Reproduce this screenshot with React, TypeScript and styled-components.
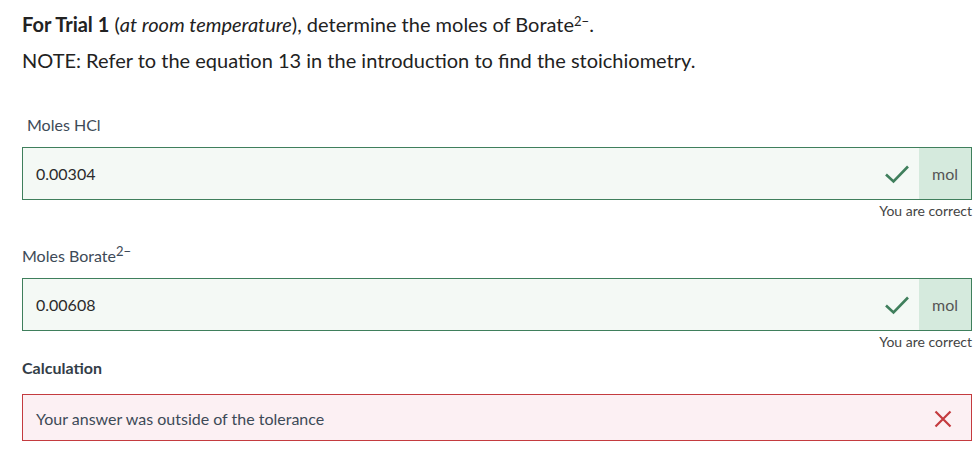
import styled, { createGlobalStyle } from 'styled-components'

const GlobalStyle = createGlobalStyle`
  body {
    margin: 0;
    background: #ffffff;
    font-family: Lato, "Noto Sans", sans-serif;
    color: #222;
  }
`

const Page = styled.div`
  padding: 9px 5px 0 22px;
`

const Prompt = styled.p`
  margin: 0;
  font-size: 20px;
  line-height: 30px;
  color: #222;

  & + & {
    margin-top: 6px;
  }
`

const Sup = styled.sup`
  font-size: 13px;
  line-height: 0;
  vertical-align: 0.45em;
`

const Field = styled.div<{ $first?: boolean }>`
  margin-top: ${(p) => (p.$first ? '38px' : '23px')};
`

const Label = styled.div<{ $indent?: boolean }>`
  font-size: 16px;
  line-height: 24px;
  color: #3d4a57;
  padding-left: ${(p) => (p.$indent ? '5px' : '0')};
`

const InputRow = styled.div`
  margin-top: 10px;
  height: 53px;
  box-sizing: border-box;
  display: flex;
  align-items: stretch;
  border: 1px solid #3f7f5c;
  background: #f4f9f5;
`

const Value = styled.div`
  flex: 1;
  display: flex;
  align-items: center;
  padding-left: 13px;
  font-size: 16px;
  color: #2b2b2b;
`

const Status = styled.div`
  display: flex;
  align-items: center;
  padding-right: 9px;
`

const Unit = styled.div`
  width: 52px;
  display: flex;
  align-items: center;
  justify-content: center;
  background: #d5eadd;
  font-size: 16px;
  color: #555;
`

const Feedback = styled.div`
  margin-top: 1px;
  text-align: right;
  font-size: 14px;
  line-height: 20px;
  color: #444;
`

const SectionTitle = styled.div`
  margin-top: 4px;
  font-size: 16px;
  line-height: 24px;
  font-weight: 700;
  color: #333d47;
`

const ErrorBox = styled.div`
  margin-top: 14px;
  height: 47px;
  box-sizing: border-box;
  display: flex;
  align-items: center;
  justify-content: space-between;
  padding: 2px 19px 0 13px;
  border: 1px solid #c43b3f;
  background: #fcf0f3;
  font-size: 16px;
  color: #3d4a57;
`

const Check = () => (
  <svg width="26" height="20" viewBox="0 0 26 20">
    <path d="M2 10.5 L9.5 17.5 L24 2.5" fill="none" stroke="#3f7f5c" strokeWidth="2.6" />
  </svg>
)

const Cross = () => (
  <svg width="18" height="18" viewBox="0 0 18 18">
    <path d="M1.5 1.5 L16.5 16.5 M16.5 1.5 L1.5 16.5" fill="none" stroke="#c43b3f" strokeWidth="2.2" />
  </svg>
)

const AnswerField = ({
  label,
  value,
  first,
}: {
  label: React.ReactNode
  value: string
  first?: boolean
}) => (
  <Field $first={first}>
    <Label $indent={first}>{label}</Label>
    <InputRow>
      <Value>{value}</Value>
      <Status>
        <Check />
      </Status>
      <Unit>mol</Unit>
    </InputRow>
    <Feedback>You are correct</Feedback>
  </Field>
)

const App = () => (
  <>
    <GlobalStyle />
    <Page>
      <Prompt>
        <b>For Trial 1</b> (<i>at room temperature</i>), determine the moles of Borate
        <Sup>2−</Sup>.
      </Prompt>
      <Prompt>NOTE: Refer to the equation 13 in the introduction to find the stoichiometry.</Prompt>
      <AnswerField first label="Moles HCl" value="0.00304" />
      <AnswerField
        label={
          <>
            Moles Borate<Sup>2−</Sup>
          </>
        }
        value="0.00608"
      />
      <SectionTitle>Calculation</SectionTitle>
      <ErrorBox>
        <span>Your answer was outside of the tolerance</span>
        <Cross />
      </ErrorBox>
    </Page>
  </>
)

export default App
